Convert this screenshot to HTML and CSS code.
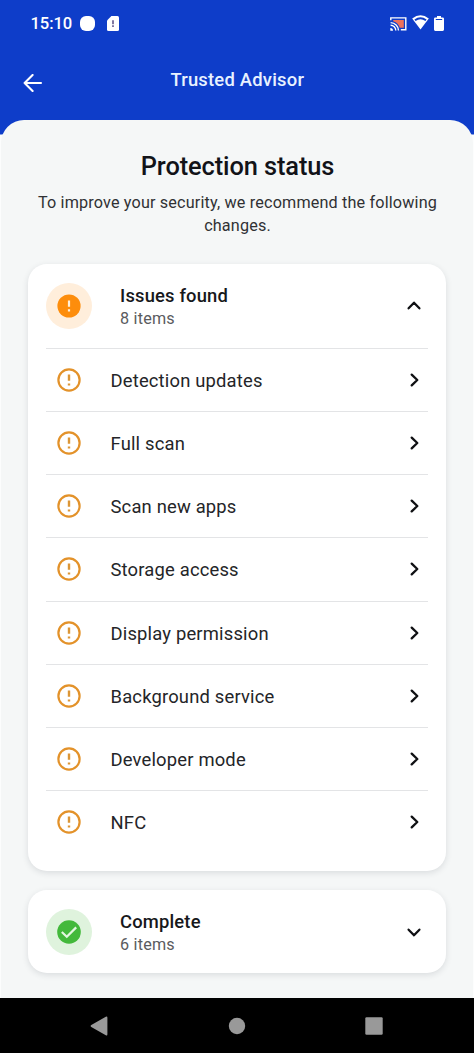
FILE: index.html
```html
<!DOCTYPE html>
<html lang="en">
<head>
<meta charset="utf-8">
<title>Trusted Advisor</title>
<link rel="stylesheet" href="styles.css">
</head>
<body>
<svg class="defs" aria-hidden="true">
  <symbol id="alert" viewBox="0 0 24 24"><circle cx="12" cy="12" r="10.6" fill="none" stroke="#e3922a" stroke-width="2.2"/><path d="M12 6.4v6.4M12 15.4v2.2" fill="none" stroke="#dc9636" stroke-width="2.4"/></symbol>
  <symbol id="chevron" viewBox="0 0 16 16"><path d="M5.7 2.6 11.3 8l-5.6 5.4" fill="none" stroke="#101114" stroke-width="2.3" stroke-linecap="round" stroke-linejoin="round"/></symbol>
</svg>
<div class="screen">
  <div class="status-bar">
    <span class="clock">15:10</span>
    <span class="blob"></span>
    <svg class="sim" viewBox="0 0 12 15"><path d="M4.4 0H10.5Q12 0 12 1.5v12Q12 15 10.5 15h-9Q0 15 0 13.5V4.4z" fill="#fff"/><path d="M6 4.2v4M6 9.3v1.6" stroke="#4a3f79" stroke-width="1.4"/></svg>
    <span class="spacer"></span>
    <svg class="cast" viewBox="0 0 17 14"><path d="M3.2 3H13.8V10.8H9.8Q8.5 6 3.2 4.2z" fill="#ee725b"/><path d="M.8 3.2V.9H15.8V12.8H10.8" fill="none" stroke="#fff" stroke-width="1.4"/><path d="M.6 5.6A8 8 0 0 1 8.5 13.5M.6 8.3a5.2 5.2 0 0 1 5.2 5.2" fill="none" stroke="#fff" stroke-width="1.4"/><path d="M.3 10.9A2.8 2.8 0 0 1 3 13.7H.3z" fill="#fff"/></svg>
    <svg class="wifi" viewBox="0 0 17 15"><path d="M.2 3.6Q8.5-3 16.8 3.6L8.5 14.5z" fill="#fff"/><path d="M2.4 4.5Q8.5 0 14.6 4.5L13.4 6Q8.5 2.4 3.6 6z" fill="#0e3dc9"/></svg>
    <svg class="battery" viewBox="0 0 10 15"><path d="M3 0h4v1.5h1.7Q10 1.5 10 2.8v10.8Q10 15 8.7 15H1.3Q0 15 0 13.6V2.8Q0 1.5 1.3 1.5H3z" fill="#fff"/><path d="M1.8 3.5h6.4" stroke="#0e3dc9" stroke-width="1"/></svg>
  </div>
  <div class="app-bar">
    <svg class="back" viewBox="0 0 20 18"><path d="M18 9H1.6M9.6 1 1.6 9l8 8" fill="none" stroke="#fff" stroke-width="2.1" stroke-linecap="round" stroke-linejoin="round"/></svg>
    <h1 class="app-title">Trusted Advisor</h1>
  </div>
  <main class="sheet">
    <h2 class="heading">Protection status</h2>
    <p class="intro">To improve your security, we recommend the following changes.</p>
    <section class="card issues">
      <div class="card-head">
        <svg class="badge" viewBox="0 0 46 46"><circle cx="23" cy="23" r="23" fill="#ffeedb"/><circle cx="23" cy="23" r="11.6" fill="#fd8d0c"/><path d="M23 17.4v6.4M23 26.3v2.3" stroke="#fff0db" stroke-width="2.2"/></svg>
        <div class="labels"><h3 class="card-title">Issues found</h3><p class="count">8 items</p></div>
        <svg class="chev up"><use href="#chevron"/></svg>
      </div>
      <ul class="list">
        <li class="row"><svg class="alert"><use href="#alert"/></svg><span class="name">Detection updates</span><svg class="chev"><use href="#chevron"/></svg></li>
        <li class="row"><svg class="alert"><use href="#alert"/></svg><span class="name">Full scan</span><svg class="chev"><use href="#chevron"/></svg></li>
        <li class="row"><svg class="alert"><use href="#alert"/></svg><span class="name">Scan new apps</span><svg class="chev"><use href="#chevron"/></svg></li>
        <li class="row"><svg class="alert"><use href="#alert"/></svg><span class="name">Storage access</span><svg class="chev"><use href="#chevron"/></svg></li>
        <li class="row"><svg class="alert"><use href="#alert"/></svg><span class="name">Display permission</span><svg class="chev"><use href="#chevron"/></svg></li>
        <li class="row"><svg class="alert"><use href="#alert"/></svg><span class="name">Background service</span><svg class="chev"><use href="#chevron"/></svg></li>
        <li class="row"><svg class="alert"><use href="#alert"/></svg><span class="name">Developer mode</span><svg class="chev"><use href="#chevron"/></svg></li>
        <li class="row"><svg class="alert"><use href="#alert"/></svg><span class="name">NFC</span><svg class="chev"><use href="#chevron"/></svg></li>
      </ul>
    </section>
    <section class="card complete">
      <div class="card-head">
        <svg class="badge" viewBox="0 0 46 46"><circle cx="23" cy="23" r="23" fill="#dff3dd"/><circle cx="23" cy="23" r="11.8" fill="#43b93b"/><path d="m15.8 23 5 4.8 9.4-9.4" fill="none" stroke="#e4f7e0" stroke-width="2.2"/></svg>
        <div class="labels"><h3 class="card-title">Complete</h3><p class="count">6 items</p></div>
        <svg class="chev down"><use href="#chevron"/></svg>
      </div>
    </section>
  </main>
  <nav class="nav-bar">
    <svg class="nav-icon" viewBox="0 0 20 20"><path d="M1.3 9.1 15.8.8Q17.4 0 17.4 1.8v16.4q0 1.8-1.6 1L1.3 10.9q-1.4-.9 0-1.8z" fill="#999"/></svg>
    <svg class="nav-icon" viewBox="0 0 20 20"><circle cx="10" cy="10" r="8.2" fill="#999"/></svg>
    <svg class="nav-icon" viewBox="0 0 20 20"><rect x="1.3" y="1.3" width="17.4" height="17.4" rx="1.2" fill="#999"/></svg>
  </nav>
</div>
</body>
</html>
```
FILE: styles.css
```css
* { box-sizing: border-box; margin: 0; padding: 0; }
body { font-family: Roboto, "Noto Sans", sans-serif; color: #1b1c1f; }
svg { display: block; flex: none; }
.defs { width: 0; height: 0; position: absolute; }
.screen { width: 474px; height: 1053px; display: flex; flex-direction: column; background: linear-gradient(#0e3dc9 134px, #fcfdfd 135px); overflow: hidden; }
.status-bar { height: 48px; display: flex; align-items: center; padding: 0 30px; color: #fff; }
.clock { width: 49.5px; font-size: 16.6px; font-weight: 500; line-height: 20px; letter-spacing: -.1px; padding-left: .5px; }
.blob { width: 15.5px; height: 15.5px; border-radius: 6px; background: #fff; margin-top: -1px; }
.sim { width: 12px; height: 15px; margin-left: 12px; margin-top: -1px; }
.spacer { flex: 1; }
.cast { width: 17px; height: 14px; margin-top: -1px; }
.wifi { width: 17px; height: 15px; margin-left: 4.5px; margin-top: -3px; }
.battery { width: 10px; height: 15px; margin-left: 5.5px; margin-top: -2px; }
.app-bar { height: 72px; display: grid; grid-template-columns: 56px 1fr 56px; padding-top: 20.5px; }
.back { width: 20px; height: 18px; margin: 5px 0 0 22.5px; }
.app-title { font-size: 18.4px; font-weight: 500; line-height: 22px; letter-spacing: .22px; padding-left: .5px; text-align: center; color: #e8f2ff; }
.sheet { flex: 1; margin: 0 1px; padding: 30px 27px 0; background: #f5f7f7; border-radius: 23px 23px 0 0; }
.heading { font-size: 25.4px; font-weight: 500; line-height: 32px; letter-spacing: -.1px; padding-left: 1px; text-align: center; color: #121318; }
.intro { margin: 9px 0 0; padding-left: 1px; font-size: 16.2px; line-height: 23px; letter-spacing: .16px; text-align: center; color: #303134; }
.card { background: #fff; border-radius: 19px; padding: 0 18px; box-shadow: 0 2px 6px rgba(40, 45, 65, .13); }
.issues { height: 607px; margin-top: 27px; }
.complete { height: 83px; margin-top: 19px; }
.card-head { height: 84px; display: flex; align-items: center; }
.badge { width: 46px; height: 46px; }
.labels { flex: 1; margin-left: 28px; padding-top: 2px; }
.card-title { font-size: 18.4px; font-weight: 500; line-height: 23px; letter-spacing: .17px; color: #17181b; }
.count { font-size: 16.2px; line-height: 23px; letter-spacing: .2px; color: #5a5b5e; }
.list { list-style: none; }
.row { height: 63.15px; display: flex; align-items: center; border-top: 1.5px solid #e3e4e6; }
.alert { width: 24px; height: 24px; margin-left: 11px; }
.name { flex: 1; margin-left: 29.5px; padding-top: 2px; font-size: 18.4px; line-height: 24px; letter-spacing: .18px; color: #242528; }
.chev { width: 16px; height: 16px; margin-right: 6px; }
.up { transform: rotate(-90deg); }
.down { transform: rotate(90deg); }
.nav-bar { height: 55px; display: grid; grid-template-columns: repeat(3, 20px); justify-content: center; align-items: center; column-gap: 117px; background: #000; }
```
